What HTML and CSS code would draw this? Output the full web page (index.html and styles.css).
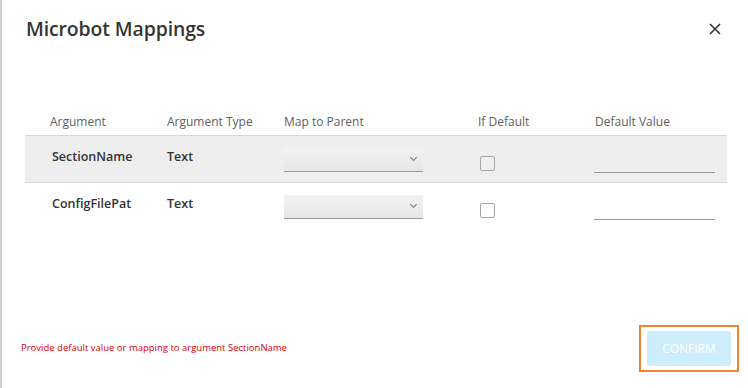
FILE: index.html
```html
<!DOCTYPE html>
<html lang="en">
<head>
    <meta charset="UTF-8">
    <title>Microbot Mappings</title>
    <link rel="stylesheet" href="styles.css">
</head>
<body>
    <div class="modal">
        <div class="modal_header">
            <h2 class="modal_title">Microbot Mappings</h2>
            <span class="close_btn">
                <svg width="12" height="12" viewBox="0 0 12 12"><path d="M1 1 L11 11 M11 1 L1 11" stroke="#333" stroke-width="1.6" fill="none"/></svg>
            </span>
        </div>

        <div class="mapping_table">
            <div class="row head_row">
                <div class="cell first">Argument</div>
                <div class="cell">Argument Type</div>
                <div class="cell">Map to Parent</div>
                <div class="cell">If Default</div>
                <div class="cell">Default Value</div>
            </div>
            <div class="row body_row shaded">
                <div class="cell first name">SectionName</div>
                <div class="cell name">Text</div>
                <div class="cell"><div class="fake_select"><span class="chev"></span></div></div>
                <div class="cell"><span class="check_box"></span></div>
                <div class="cell"><div class="line_input"></div></div>
            </div>
            <div class="row body_row">
                <div class="cell first name">ConfigFilePat</div>
                <div class="cell name">Text</div>
                <div class="cell"><div class="fake_select"><span class="chev"></span></div></div>
                <div class="cell"><span class="check_box"></span></div>
                <div class="cell"><div class="line_input"></div></div>
            </div>
        </div>

        <div class="modal_footer">
            <p class="error_msg">Provide default value or mapping to argument SectionName</p>
            <div class="focus_ring"><button class="confirm_btn">CONFIRM</button></div>
        </div>
    </div>
</body>
</html>
```

FILE: styles.css
```css
html, body {
    margin: 0;
    padding: 0;
    background: #fff;
}

.modal {
    height: 388px;
    box-sizing: border-box;
    border-left: 2px solid #cfcfcf;
    display: flex;
    flex-direction: column;
    font-family: "Open Sans", "Noto Sans", sans-serif;
    color: #333;
}

.modal_header {
    display: flex;
    justify-content: space-between;
    align-items: center;
    padding: 13px 27px 0 24px;
    height: 30px;
}

.modal_title {
    margin: 0;
    font-size: 19.4px;
    font-weight: 600;
    color: #343434;
    letter-spacing: -0.1px;
}

.close_btn {
    display: flex;
    margin-top: 2px;
}

.mapping_table {
    margin: 65px 21px 0 23px;
}

.row {
    display: grid;
    grid-template-columns: 117px 117px 194px 117px 155px;
}

.head_row {
    height: 27px;
    align-items: center;
    font-size: 12px;
    color: #606060;
    border-bottom: 1px solid #d6d6d6;
}

.body_row {
    height: 46px;
    align-items: center;
    border-bottom: 1px solid #d6d6d6;
}

.body_row:last-child {
    border-bottom: none;
}

.shaded {
    background: #eeeeee;
}

.cell {
    padding-left: 25px;
}

.body_row .first {
    padding-left: 27px;
}

.name {
    font-size: 12.5px;
    font-weight: 600;
    color: #333;
    margin-top: -6px;
}

.fake_select {
    position: relative;
    width: 139px;
    height: 23px;
    margin-top: 1px;
    background: linear-gradient(#f2f2f2, #e6e6e6);
    border-bottom: 1px solid #9a9a9a;
}

.chev {
    position: absolute;
    right: 7px;
    top: 7px;
    width: 4px;
    height: 4px;
    border-right: 1px solid #777;
    border-bottom: 1px solid #777;
    transform: rotate(45deg);
}

.check_box {
    display: block;
    width: 13px;
    height: 13px;
    margin-left: 2px;
    margin-top: 8px;
    border: 1px solid #a6a6a6;
    border-radius: 2px;
    background: #fff;
}

.shaded .check_box {
    background: #f0f0f0;
}

.line_input {
    width: 121px;
    margin-left: -1px;
    margin-top: 27px;
    border-bottom: 1px solid #9a9a9a;
}

.modal_footer {
    margin-top: auto;
    display: flex;
    justify-content: space-between;
    align-items: center;
    padding: 0 9px 16px 19px;
}

.error_msg {
    margin: 0 0 2px;
    font-size: 9.5px;
    color: #d80000;
}

.focus_ring {
    border: 2px solid #ec8433;
    padding: 4px 6px;
}

.confirm_btn {
    width: 84px;
    height: 35px;
    border: none;
    border-radius: 3px;
    background: #cdedfc;
    color: #fff;
    font-family: "Open Sans", "Noto Sans", sans-serif;
    font-size: 12px;
}
```
